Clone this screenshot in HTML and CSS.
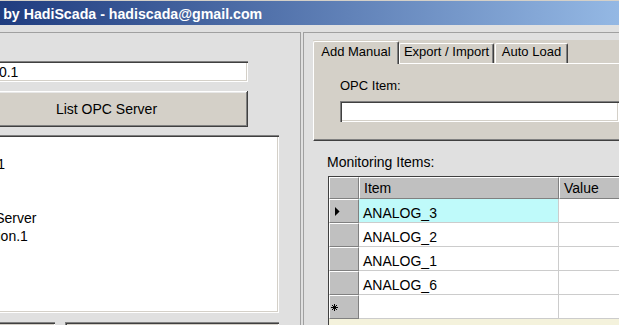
FILE: index.html
```html
<!DOCTYPE html>
<html lang="en">
<head>
  <meta charset="UTF-8">
  <title>Simple OPC Client</title>
  <link rel="stylesheet" href="styles.css">
</head>
<body>
  <div class="window">
    <div class="titlebar">Simple OPC Client - by HadiScada - hadiscada@gmail.com</div>
    <div class="client">
      <div class="left-panel">
        <input class="host sunken" type="text" value="127.0.0.1">
        <button class="list-btn raised">List OPC Server</button>
        <ul class="server-list sunken">
          <li>OPC.SimaticNET</li>
          <li>ArchestrA.DASABCIP.1</li>
          <li>ICONICS.Simulator.1</li>
          <li>RSLinx OPC Server</li>
          <li>RSLinx Remote OPC Server</li>
          <li>Matrikon.OPC.Simulation.1</li>
        </ul>
        <div class="actions">
          <button class="connect sunken">Connect</button>
          <button class="disconnect sunken">Disconnect</button>
        </div>
      </div>
      <div class="right-panel">
        <div class="tabs">
          <div class="tab-strip">
            <div class="tab active tab-add">Add Manual</div>
            <div class="tab tab-export">Export / Import</div>
            <div class="tab tab-auto">Auto Load</div>
          </div>
          <div class="tab-page">
            <label class="item-label">OPC Item:</label>
            <input class="item-input sunken" type="text">
          </div>
        </div>
        <p class="grid-label">Monitoring Items:</p>
        <div class="grid">
          <div class="row head">
            <div class="fixed ind"></div>
            <div class="fixed item">Item</div>
            <div class="fixed val">Value</div>
          </div>
          <div class="row">
            <div class="fixed ind">
              <svg class="arrow" width="5" height="9" viewBox="0 0 5 9"><path d="M0 0 L4.6 4.5 L0 9 Z" fill="#000"/></svg>
            </div>
            <div class="cell item selected">ANALOG_3</div>
            <div class="cell val"></div>
          </div>
          <div class="row">
            <div class="fixed ind"></div>
            <div class="cell item">ANALOG_2</div>
            <div class="cell val"></div>
          </div>
          <div class="row">
            <div class="fixed ind"></div>
            <div class="cell item">ANALOG_1</div>
            <div class="cell val"></div>
          </div>
          <div class="row">
            <div class="fixed ind"></div>
            <div class="cell item">ANALOG_6</div>
            <div class="cell val"></div>
          </div>
          <div class="row">
            <div class="fixed ind">
              <svg class="star" width="7" height="7" viewBox="0 0 7 7"><path d="M0 3.5 H7 M3.5 0 V7 M1 1 L6 6 M6 1 L1 6" stroke="#000" stroke-width="1" fill="none"/></svg>
            </div>
            <div class="cell item"></div>
            <div class="cell val"></div>
          </div>
        </div>
      </div>
    </div>
  </div>
</body>
</html>
```

FILE: styles.css
```css
html, body {
  margin: 0;
  height: 100%;
  overflow: hidden;
}
body {
  background: #e0e0e0;
  font-family: "Liberation Sans", Arial, sans-serif;
  font-size: 14px;
  color: #000;
}
.window {
  width: 900px;
  margin-left: -150px; /* window is cropped on the left */
}
.titlebar {
  height: 25px;
  box-sizing: border-box;
  border-top: 1px solid #d4d0c8;
  padding: 2px 0 0 16px;
  line-height: 22px;
  background: linear-gradient(to right, #1f3c7f 150px, #94b8e4 769px);
  color: #fff;
  font-size: 14.2px;
  font-weight: bold;
  white-space: nowrap;
}
.client {
  display: flex;
  gap: 2px;
  padding-top: 7px;
}

/* 3d borders */
.sunken {
  border: none;
  outline: none;
  background: #fff;
  box-shadow: inset 1px 1px #808080, inset 2px 2px #404040, inset -1px -1px #fff, inset -2px -2px #d4d0c8;
}
.raised {
  border: none;
  background: #d4d0c8;
  box-shadow: inset -1px -1px #404040, inset 1px 1px #fff, inset -2px -2px #808080, inset 2px 2px #e8e8e8;
}

/* left side */
.left-panel {
  width: 451px;
  height: 300px;
  box-sizing: border-box;
  border-top: 1px solid #a0a0a0;
  border-right: 1px solid #a0a0a0;
  display: flex;
  flex-direction: column;
  align-items: flex-start;
}
.left-panel > * {
  flex-shrink: 0;
}
.host {
  display: block;
  margin: 28px 0 0 106px;
  width: 292px;
  height: 21px;
  box-sizing: border-box;
  padding: 0 4px;
  font: inherit;
  color: #000;
}
.list-btn {
  margin: 9px 0 0 115px;
  width: 283px;
  height: 36px;
  padding: 0;
  font: inherit;
  color: #000;
}
.server-list {
  list-style: none;
  margin: 8px 0 0 4px;
  padding: 2px 5px;
  width: 425px;
  height: 178px;
  box-sizing: border-box;
  line-height: 18px;
  white-space: nowrap;
  overflow: hidden;
}
.actions {
  display: flex;
  gap: 10px;
  margin: 9px 0 0 4px;
}
.actions button {
  height: 30px;
  padding: 0;
  font: inherit;
  color: #000;
  background: #d4d0c8;
}
.connect {
  width: 201px;
}
.disconnect {
  width: 214px;
}

/* right side */
.right-panel {
  flex: 1;
  height: 300px;
  border-top: 1px solid #a0a0a0;
  border-left: 1px solid #a0a0a0;
}
.tabs {
  margin: 7px 0 0 9px;
  background: #d4d0c8;
}
.tab-strip {
  display: flex;
  align-items: flex-end;
  height: 23px;
}
.tab {
  box-sizing: border-box;
  height: 20px;
  border-top: 1px solid #fff;
  border-left: 1px solid #fff;
  border-right: 1px solid #404040;
  border-radius: 2px 2px 0 0;
  box-shadow: inset -1px 0 #808080;
  text-align: center;
  font-size: 13px;
  line-height: 16px;
  white-space: nowrap;
}
.tab.active {
  height: 23px;
  margin-bottom: -1px;
  padding-top: 2px;
  position: relative;
  z-index: 1;
  background: #d4d0c8;
}
.tab-add {
  width: 86px;
}
.tab-export {
  width: 95px;
}
.tab-auto {
  width: 73px;
  margin-left: 1px;
}
.tab-page {
  height: 78px;
  box-sizing: border-box;
  border-top: 1px solid #fff;
  border-left: 1px solid #fff;
  border-bottom: 1px solid #404040;
  box-shadow: inset 0 -1px #808080;
  padding: 14px 0 0 26px;
}
.item-label {
  display: block;
  font-size: 13px;
  line-height: 16px;
}
.item-input {
  display: block;
  margin-top: 7px;
  width: 279px;
  height: 21px;
  box-sizing: border-box;
  font: inherit;
}
.grid-label {
  margin: 13px 0 0 23px;
  line-height: 16px;
}

/* monitoring grid */
.grid {
  margin: 6px 0 0 24px;
  height: 200px;
  border-top: 1px solid #404040;
  border-left: 1px solid #404040;
  background: #f4f2dc;
}
.row {
  display: flex;
  height: 24px;
}
.row.head {
  height: 22px;
}
.row > div {
  box-sizing: border-box;
  height: 100%;
  white-space: nowrap;
  overflow: hidden;
}
.fixed {
  background: #c0c0c0;
  border-top: 1px solid #fff;
  border-left: 1px solid #fff;
  border-right: 1px solid #808080;
  border-bottom: 1px solid #808080;
  padding: 1px 0 0 4px;
  line-height: 19px;
}
.cell {
  background: #fff;
  border-right: 1px solid #cccccc;
  border-bottom: 1px solid #cccccc;
  padding: 5px 0 0 4px;
  line-height: 18px;
}
.cell.selected {
  background: #bffafa;
}
.ind {
  width: 30px;
}
.item {
  width: 200px;
}
.val {
  width: 100px;
}
.row .ind {
  padding: 0;
}
.arrow {
  display: block;
  margin: 7px 0 0 5px;
}
.star {
  display: block;
  margin: 8px 0 0 1px;
}
```
